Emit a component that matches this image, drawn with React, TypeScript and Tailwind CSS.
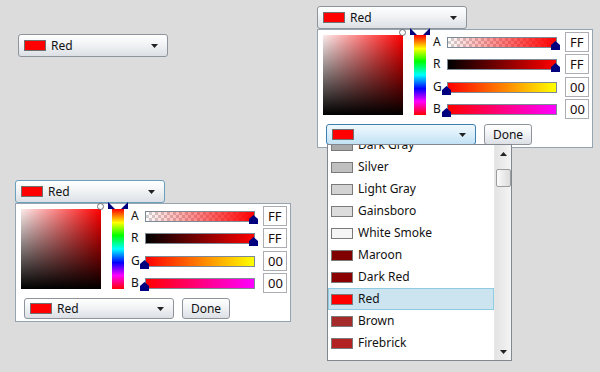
import React from "react";

type Swatch = { name: string; hex: string };

const listColors: Swatch[] = [
  { name: "Dark Gray", hex: "#a9a9a9" },
  { name: "Silver", hex: "#c0c0c0" },
  { name: "Light Gray", hex: "#d3d3d3" },
  { name: "Gainsboro", hex: "#dcdcdc" },
  { name: "White Smoke", hex: "#f5f5f5" },
  { name: "Maroon", hex: "#800000" },
  { name: "Dark Red", hex: "#8b0000" },
  { name: "Red", hex: "#ff0000" },
  { name: "Brown", hex: "#a52a2a" },
  { name: "Firebrick", hex: "#b22222" },
];

function DownArrow() {
  return (
    <svg width="7" height="4" viewBox="0 0 7 4">
      <path d="M0 0h7L3.5 4z" fill="#222" />
    </svg>
  );
}

function UpArrow() {
  return (
    <svg width="7" height="4" viewBox="0 0 7 4">
      <path d="M0 4h7L3.5 0z" fill="#222" />
    </svg>
  );
}

type Tone = "normal" | "focus" | "open";

const tones: Record<Tone, string> = {
  normal: "border-[#8e949b] bg-[linear-gradient(to_bottom,#ffffff,#f1f3f5_45%,#dce0e5)]",
  focus: "border-[#6aa0bc] bg-[linear-gradient(to_bottom,#ffffff,#f1f3f5_45%,#dce0e5)]",
  open: "border-[#3c7fb1] bg-[linear-gradient(to_bottom,#f1f8fd,#dceffa_45%,#c2e2f5)]",
};

function Combo({ label, tone = "normal", className = "" }: { label?: string; tone?: Tone; className?: string }) {
  return (
    <div className={`flex items-center rounded-[3px] border pl-[5px] pr-[9px] ${tones[tone]} ${className}`}>
      <span className="w-[22px] h-[11px] shrink-0 bg-[#ff0000] border border-[#707070]" />
      {label && <span className="ml-[5px] text-[12px] leading-none text-[#111]">{label}</span>}
      <span className="ml-auto flex">
        <DownArrow />
      </span>
    </div>
  );
}

function Thumb({ className }: { className: string }) {
  return (
    <svg className={`absolute top-[3px] ${className}`} width="9" height="9" viewBox="0 0 9 9">
      <path d="M4.5 0L9 4V9H0V4z" fill="#00007f" />
    </svg>
  );
}

function SliderRow({
  label,
  value,
  track,
  atEnd,
  checker,
  className = "",
}: {
  label: string;
  value: string;
  track: string;
  atEnd: boolean;
  checker?: boolean;
  className?: string;
}) {
  return (
    <div className={`flex items-center h-[20px] ${className}`}>
      <span className="w-[21px] pl-[7px] text-[12px] leading-none text-[#111]">{label}</span>
      <div className="relative w-[110px] h-[11px] border border-[#7d8994]">
        {checker ? (
          <div className="h-full bg-[repeating-conic-gradient(#d0d0d0_0_25%,#ffffff_0_50%)] bg-[length:6px_6px]">
            <div className={`h-full ${track}`} />
          </div>
        ) : (
          <div className={`h-full ${track}`} />
        )}
        <Thumb className={atEnd ? "left-[103px]" : "left-[-6px]"} />
      </div>
      <div className="ml-[8px] w-[24px] h-[20px] border border-[#abadb3] bg-white flex items-center pl-[4px] text-[13px] leading-none text-[#1a0a0a]">
        {value}
      </div>
    </div>
  );
}

function ListPopup() {
  return (
    <div className="absolute left-[10px] top-[138px] w-[185px] h-[217px] flex border border-[#828790] bg-white overflow-hidden">
      <div className="flex-1 overflow-hidden">
        <div className="-mt-[11px]">
          {listColors.map((c) => (
            <div
              key={c.name}
              className={`flex items-center h-[22px] pl-[2px] border ${
                c.name === "Red" ? "bg-[#cbe4ef] border-[#8ecbe0]" : "border-transparent"
              }`}
            >
              <span className="w-[22px] h-[11px] shrink-0 border border-[#7a7a7a]" style={{ background: c.hex }} />
              <span className="ml-[5px] text-[12px] leading-none text-[#111]">{c.name}</span>
            </div>
          ))}
        </div>
      </div>
      <div className="w-[17px] flex flex-col items-center bg-[linear-gradient(to_right,#e3e3e3,#f4f4f4)] border-l border-[#e8e8e8]">
        <div className="h-[17px] flex items-center justify-center">
          <UpArrow />
        </div>
        <div className="mt-[7px] w-[15px] h-[18px] rounded-[2px] border border-[#9c9c9c] bg-[linear-gradient(to_right,#fafafa,#dcdcdc)]" />
        <div className="mt-auto h-[17px] flex items-center justify-center">
          <DownArrow />
        </div>
      </div>
    </div>
  );
}

function ColorPicker({ header, listOpen = false }: { header: Tone; listOpen?: boolean }) {
  return (
    <div className="relative w-[276px]">
      <Combo label="Red" tone={header} className="w-[150px] h-[23px]" />
      <div className="w-[276px] h-[119px] border border-[#96a3b0] bg-white">
        <div className="flex">
          <div className="relative ml-[5px] mt-[5px] w-[80px] h-[80px] bg-[linear-gradient(to_bottom,rgba(0,0,0,0),#000),linear-gradient(to_right,#fbecec,#ff0000)]">
            <span className="absolute left-[76px] top-[-6px] w-[7px] h-[7px] rounded-full border-[1.5px] border-[#707070]" />
          </div>
          <div className="relative ml-[11px] mt-[5px] w-[12px] h-[80px] bg-[linear-gradient(to_bottom,#ff0000,#ffff00_17%,#00ff00_33%,#00ffff_50%,#0000ff_67%,#ff00ff_83%,#ff0000)]">
            <svg className="absolute left-[-4px] top-[-7px]" width="20" height="7" viewBox="0 0 20 7">
              <path d="M0 0L7 7H0z M20 0L13 7H20z" fill="#00007f" />
            </svg>
          </div>
          <div className="flex flex-col mt-[2px]">
            <SliderRow
              label="A"
              value="FF"
              atEnd
              checker
              track="bg-[linear-gradient(to_right,rgba(255,0,0,0),#ff0000)]"
            />
            <SliderRow
              label="R"
              value="FF"
              atEnd
              track="bg-[linear-gradient(to_right,#000000,#ff0000)]"
              className="mt-[2px]"
            />
            <SliderRow
              label="G"
              value="00"
              atEnd={false}
              track="bg-[linear-gradient(to_right,#ff0000,#ffff00)]"
              className="mt-[3px]"
            />
            <SliderRow
              label="B"
              value="00"
              atEnd={false}
              track="bg-[linear-gradient(to_right,#ff0000,#ff00ff)]"
              className="mt-[2px]"
            />
          </div>
        </div>
        <div className="flex mt-[5px] ml-[8px]">
          {listOpen ? (
            <Combo tone="open" className="w-[150px] h-[21px]" />
          ) : (
            <Combo label="Red" className="w-[150px] h-[21px]" />
          )}
          <button className="ml-[8px] w-[48px] h-[21px] rounded-[3px] border border-[#8e949b] bg-[linear-gradient(to_bottom,#ffffff,#f1f3f5_45%,#dce0e5)] text-[12px] leading-none text-[#111]">
            Done
          </button>
        </div>
      </div>
      {listOpen && <ListPopup />}
    </div>
  );
}

export default function App() {
  return (
    <div className="w-[600px] h-[372px] flex overflow-hidden bg-[#dcdcdc] font-['Noto_Sans',sans-serif]">
      <div className="ml-[15px] w-[276px] flex flex-col">
        <Combo label="Red" className="ml-[3px] mt-[34px] w-[150px] h-[23px]" />
        <div className="mt-[123px]">
          <ColorPicker header="focus" />
        </div>
      </div>
      <div className="ml-[26px] mt-[6px]">
        <ColorPicker header="normal" listOpen />
      </div>
    </div>
  );
}
